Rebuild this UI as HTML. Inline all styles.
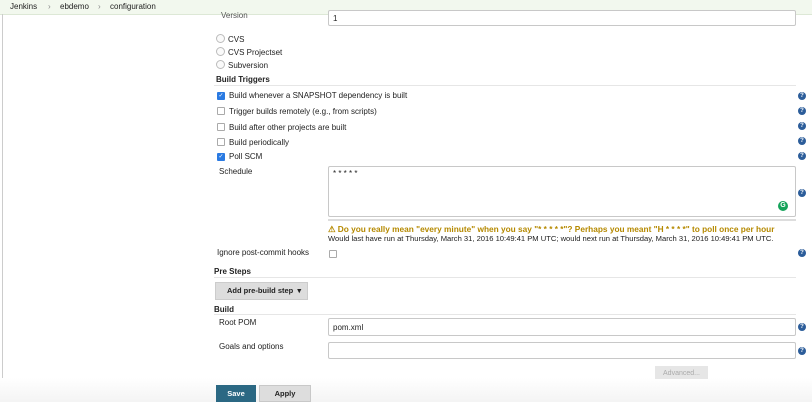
<!DOCTYPE html>
<html><head><meta charset="utf-8"><style>
body{margin:0;width:812px;height:402px;overflow:hidden;background:#fff;font-family:"Liberation Sans",Arial,sans-serif;font-size:8px;color:#222;position:relative}
.a{position:absolute;white-space:nowrap}
.bc{position:absolute;left:0;top:0;width:812px;height:14px;background:#f2f8ee;border-bottom:1px solid #dde8d6}
.lb{position:absolute;left:2px;top:14px;width:1px;height:388px;background:#ccc}
.h{position:absolute;width:8px;height:8px;border-radius:50%;background:#2c5d9a;color:#fff;font-size:6px;line-height:8px;text-align:center;font-weight:bold}
.in{position:absolute;border:1px solid #c8c8c8;border-radius:2px;background:#fff;box-sizing:border-box;font-size:8px;padding:3px 4px}
.rd{position:absolute;width:7px;height:7px;border:1px solid #bbb;border-radius:50%;background:#fafafa}
.cb{position:absolute;width:6px;height:6px;border:1px solid #aaa;border-radius:1px;background:#fff}
.cb.on{background:#2a7ae2;border-color:#2a7ae2;color:#fff;font-size:6px;line-height:6px;text-align:center}
.b{font-weight:bold}
.sep{position:absolute;left:214px;width:582px;height:1px;background:#e6e6e6}
</style></head><body>
<div class="bc"></div>
<div class="a" style="left:10px;top:2px">Jenkins</div>
<div class="a" style="left:48px;top:2px;color:#888">›</div>
<div class="a" style="left:60px;top:2px">ebdemo</div>
<div class="a" style="left:98px;top:2px;color:#888">›</div>
<div class="a" style="left:110px;top:2px">configuration</div>
<div class="lb"></div>
<div class="a" style="left:221px;top:11px;color:#555">Version</div>
<div class="in" style="left:328px;top:10px;width:468px;height:16px;padding-top:3px">1</div>
<div class="rd" style="left:216px;top:34px"></div><div class="a" style="left:228px;top:35px">CVS</div>
<div class="rd" style="left:216px;top:47px"></div><div class="a" style="left:228px;top:48px">CVS Projectset</div>
<div class="rd" style="left:216px;top:60px"></div><div class="a" style="left:228px;top:61px">Subversion</div>
<div class="a b" style="left:216px;top:75px">Build Triggers</div>
<div class="sep" style="top:85px"></div>
<div class="cb on" style="left:217px;top:92px">✓</div><div class="a" style="left:229px;top:91px">Build whenever a SNAPSHOT dependency is built</div>
<div class="cb" style="left:217px;top:107px"></div><div class="a" style="left:229px;top:107px">Trigger builds remotely (e.g., from scripts)</div>
<div class="cb" style="left:217px;top:123px"></div><div class="a" style="left:229px;top:123px">Build after other projects are built</div>
<div class="cb" style="left:217px;top:138px"></div><div class="a" style="left:229px;top:138px">Build periodically</div>
<div class="cb on" style="left:217px;top:153px">✓</div><div class="a" style="left:229px;top:152px">Poll SCM</div>
<div class="h" style="left:798px;top:92px">?</div>
<div class="h" style="left:798px;top:107px">?</div>
<div class="h" style="left:798px;top:122px">?</div>
<div class="h" style="left:798px;top:137px">?</div>
<div class="h" style="left:798px;top:152px">?</div>
<div class="a" style="left:219px;top:167px">Schedule</div>
<div class="in" style="left:328px;top:166px;width:468px;height:51px;padding-top:2px">* * * * *</div>
<div class="a" style="left:778px;top:201px;width:10px;height:10px;border-radius:50%;background:#15a35a;color:#fff;font-size:7px;line-height:10px;text-align:center;font-weight:bold">G</div>
<div class="h" style="left:798px;top:189px">?</div>
<div class="a" style="left:328px;top:219px;width:468px;height:2px;background:#ddd"></div>
<div class="a" style="left:328px;top:224px;color:#b58900;font-weight:bold;font-size:8.3px">⚠ Do you really mean "every minute" when you say "* * * * *"? Perhaps you meant "H * * * *" to poll once per hour</div>
<div class="a" style="left:328px;top:234px;font-size:7.6px">Would last have run at Thursday, March 31, 2016 10:49:41 PM UTC; would next run at Thursday, March 31, 2016 10:49:41 PM UTC.</div>
<div class="a" style="left:217px;top:248px">Ignore post-commit hooks</div>
<div class="cb" style="left:329px;top:250px"></div>
<div class="h" style="left:798px;top:249px">?</div>
<div class="a b" style="left:214px;top:267px">Pre Steps</div>
<div class="sep" style="top:277px"></div>
<div class="a b" style="left:215px;top:282px;width:93px;height:18px;background:#ddd;border:1px solid #ccc;box-sizing:border-box;line-height:16px;text-indent:11px;font-size:7.5px">Add pre-build step &nbsp;▾</div>
<div class="a b" style="left:214px;top:305px">Build</div>
<div class="sep" style="top:314px"></div>
<div class="a" style="left:219px;top:318px">Root POM</div>
<div class="in" style="left:328px;top:318px;width:468px;height:18px;padding-top:4px">pom.xml</div>
<div class="h" style="left:798px;top:323px">?</div>
<div class="a" style="left:219px;top:342px">Goals and options</div>
<div class="in" style="left:328px;top:342px;width:468px;height:17px"></div>
<div class="h" style="left:798px;top:347px">?</div>
<div class="a" style="left:0;top:378px;width:812px;height:24px;background:linear-gradient(#fff,#f4f4f4)"></div>
<div class="a" style="left:655px;top:366px;width:53px;height:13px;background:#e6e6e6;color:#aaa;text-align:center;line-height:15px;font-size:7px">Advanced...</div>
<div class="a b" style="left:216px;top:385px;width:40px;height:17px;background:#2b6883;color:#fff;text-align:center;line-height:17px;font-size:7.5px">Save</div>
<div class="a b" style="left:259px;top:385px;width:52px;height:17px;background:#ddd;border:1px solid #c8c8c8;box-sizing:border-box;text-align:center;line-height:16px;font-size:7.5px">Apply</div>
</body></html>
